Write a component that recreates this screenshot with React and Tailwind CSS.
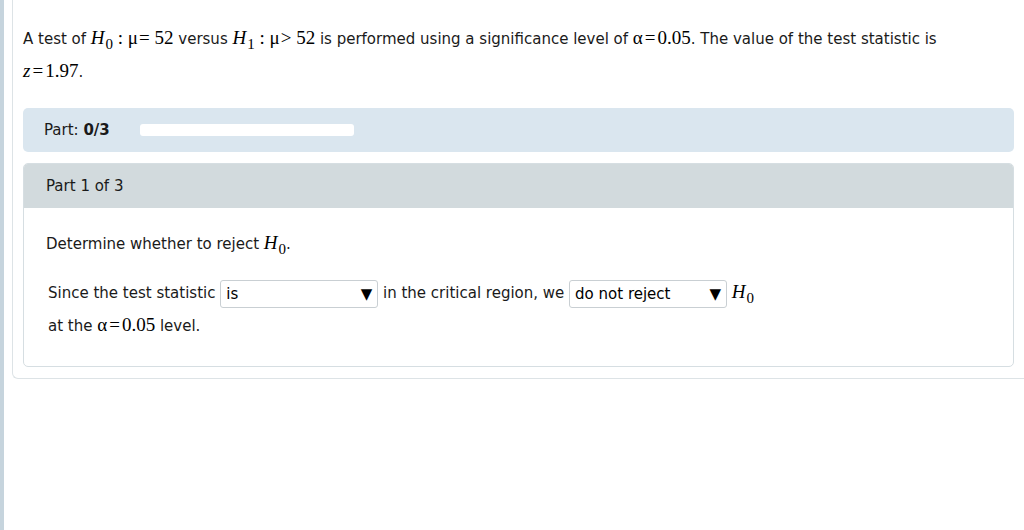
import React from 'react';

const sans = { fontFamily: '"DejaVu Sans", Verdana, sans-serif' };

function M({ children }) {
  return (
    <span className="font-['Liberation_Serif',serif] text-[19px] text-black">{children}</span>
  );
}

function H({ n }) {
  return (
    <span>
      <i>H</i>
      <span className="text-[15px] relative top-[5px] ml-[1px]">{n}</span>
    </span>
  );
}

function Eq({ s = '=' }) {
  return <span className="mx-[2px]">{s}</span>;
}

function FakeSelect({ value }) {
  return (
    <span className="inline-flex items-center justify-between w-[158px] h-[28px] border border-[#c9cfd3] rounded-[3px] bg-white pl-[5px] pr-[5px] align-middle">
      <span className="text-[15px] text-black">{value}</span>
      <span className="text-[15px] text-black">▼</span>
    </span>
  );
}

export default function App() {
  return (
    <div className="w-[1024px] h-[530px] overflow-hidden bg-white flex text-[#1a1a1a]" style={sans}>
      <div className="w-[4px] shrink-0 bg-[#c6d4dd]" />
      <div className="ml-[8px] shrink-0 w-[1040px] self-start border-l border-b border-[#dde3e6] rounded-bl-[6px] pl-[10px] pb-[11px]">
        <div className="w-[991px]">
          <p className="pt-[22px] text-[15px] leading-[31px]">
            A test of <M><H n="0" /> : μ<span className="ml-[1px]">=</span> 52</M> versus{' '}
            <M><H n="1" /> : μ<span className="ml-[1px]">&gt;</span> 52</M> is performed using a significance level
            of <M>α<Eq />0.05</M>. The value of the test statistic is
            <br />
            <M><i>z</i><Eq />1.97</M>.
          </p>

          <div className="mt-[20px] h-[44px] rounded-[5px] bg-[#dae6ef] flex items-center pl-[21px]">
            <span className="text-[15px]">
              Part: <b>0/3</b>
            </span>
            <div className="ml-[30px] w-[214px] h-[12px] rounded-[3px] bg-white" />
          </div>

          <div className="mt-[11px] rounded-[5px] border border-[#d6dee2] overflow-hidden">
            <div className="h-[44px] bg-[#d2dadd] flex items-center pl-[22px] text-[15px]">Part 1 of 3</div>
            <div className="pl-[22px] pt-[22px] pb-[24px] text-[15px]">
              <div className="leading-[26px]">
                Determine whether to reject <M><H n="0" /></M>.
              </div>
              <div className="mt-[19px] pl-[2px] leading-[32px]">
                Since the test statistic <FakeSelect value="is" /> in the critical region, we{' '}
                <FakeSelect value="do not reject" /> <M><H n="0" /></M>
                <br />
                at the <M>α<Eq />0.05</M> level.
              </div>
            </div>
          </div>
        </div>
      </div>
    </div>
  );
}
